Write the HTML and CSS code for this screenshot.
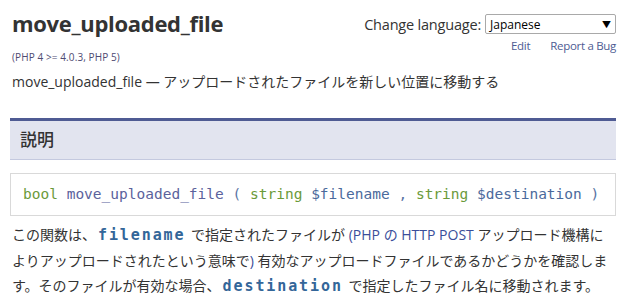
FILE: index.html
```html
<!DOCTYPE html>
<html lang="ja">
<head>
<meta charset="utf-8">
<link rel="stylesheet" href="styles.css">
</head>
<body>
<div class="page">
  <div class="top">
    <div class="titles">
      <h1 class="refname">move_uploaded_file</h1>
      <p class="verinfo">(PHP 4 &gt;= 4.0.3, PHP 5)</p>
    </div>
    <div class="tools">
      <div class="lang">
        <label>Change language:</label>
        <div class="select"><span>Japanese</span><span class="arrow">▼</span></div>
      </div>
      <div class="links">
        <a>Edit</a>
        <a>Report a Bug</a>
      </div>
    </div>
  </div>
  <p class="purpose">move_uploaded_file — アップロードされたファイルを新しい位置に移動する</p>
  <h2 class="section">説明</h2>
  <div class="methodsynopsis"><span class="type">bool</span> <span class="fn">move_uploaded_file</span> <span class="pun">(</span> <span class="type">string</span> <span class="var">$filename</span> <span class="pun">,</span> <span class="type">string</span> <span class="var">$destination</span> <span class="pun">)</span></div>
  <p class="para">この関数は、<code class="param">filename</code> で指定されたファイルが <span class="abbr">(PHP の HTTP POST</span> アップロード機構に<br>よりアップロードされたという意味で<span class="abbr">)</span> 有効なアップロードファイルであるかどうかを確認しま<br>す。そのファイルが有効な場合、<code class="param">destination</code> で指定したファイル名に移動されます。</p>
</div>
</body>
</html>
```
FILE: styles.css
```css
html, body {
  margin: 0;
  padding: 0;
  background: #fff;
}
body {
  font-family: "Open Sans", "Noto Sans CJK JP", sans-serif;
  color: #333;
  font-size: 15px;
}
.page {
  padding: 0 10px 0 10px;
}
.top {
  display: flex;
  justify-content: space-between;
  align-items: flex-start;
}
.refname {
  margin: 7px 0 0 2px;
  font-size: 22px;
  font-weight: 700;
  line-height: 32px;
  letter-spacing: -0.3px;
  color: #333;
}
.verinfo {
  margin: 11px 0 0 2px;
  font-size: 10px;
  line-height: 14px;
  color: #4e4b72;
  letter-spacing: 0.1px;
}
.tools {
  display: flex;
  flex-direction: column;
  align-items: flex-end;
  padding-top: 14px;
}
.lang {
  display: flex;
  align-items: center;
  gap: 4px;
}
.lang label {
  font-size: 14.5px;
  letter-spacing: -0.2px;
  color: #333;
}
.select {
  height: 18px;
  border: 1px solid #a9a9a9;
  border-radius: 2px;
  display: flex;
  justify-content: space-between;
  align-items: center;
  padding: 0 4px 0 4px;
  box-sizing: content-box;
  font-size: 12px;
  color: #000;
  width: 121px;
}
.select .arrow {
  font-size: 9px;
}
.links {
  display: flex;
  gap: 20px;
  margin-top: 4px;
}
.links a {
  font-size: 11.5px;
  color: #4e5c93;
  letter-spacing: -0.3px;
}
.purpose {
  margin: 7px 0 0 2px;
  font-size: 14px;
  line-height: 22px;
}
.section {
  margin: 25px 0 0 0;
  background: #e2e4ef;
  border-top: 3px solid #4f5b93;
  border-bottom: 1px solid #c4c9df;
  padding: 0 10px;
  height: 38px;
  line-height: 38px;
  font-size: 17px;
  font-weight: 500;
  color: #333;
}
.methodsynopsis {
  margin-top: 13px;
  border: 1px solid #d9d9d9;
  height: 41px;
  line-height: 41px;
  padding: 0 12px;
  font-family: "DejaVu Sans Mono", monospace;
  font-size: 14.5px;
  color: #4e6ea0;
  white-space: nowrap;
}
.type { color: #6b9a3a; }
.fn { color: #5b629c; }
.var { color: #4b6a9c; }
.pun { color: #5a74a4; }
.para {
  margin: 6px 0 0 2px;
  font-size: 14px;
  line-height: 25px;
  white-space: nowrap;
}
.param {
  font-family: "DejaVu Sans Mono", monospace;
  font-weight: 700;
  color: #336699;
  font-size: 15px;
  letter-spacing: 1.9px;
  margin: 0 2px;
}
.abbr { color: #3a4e9a; }
```
